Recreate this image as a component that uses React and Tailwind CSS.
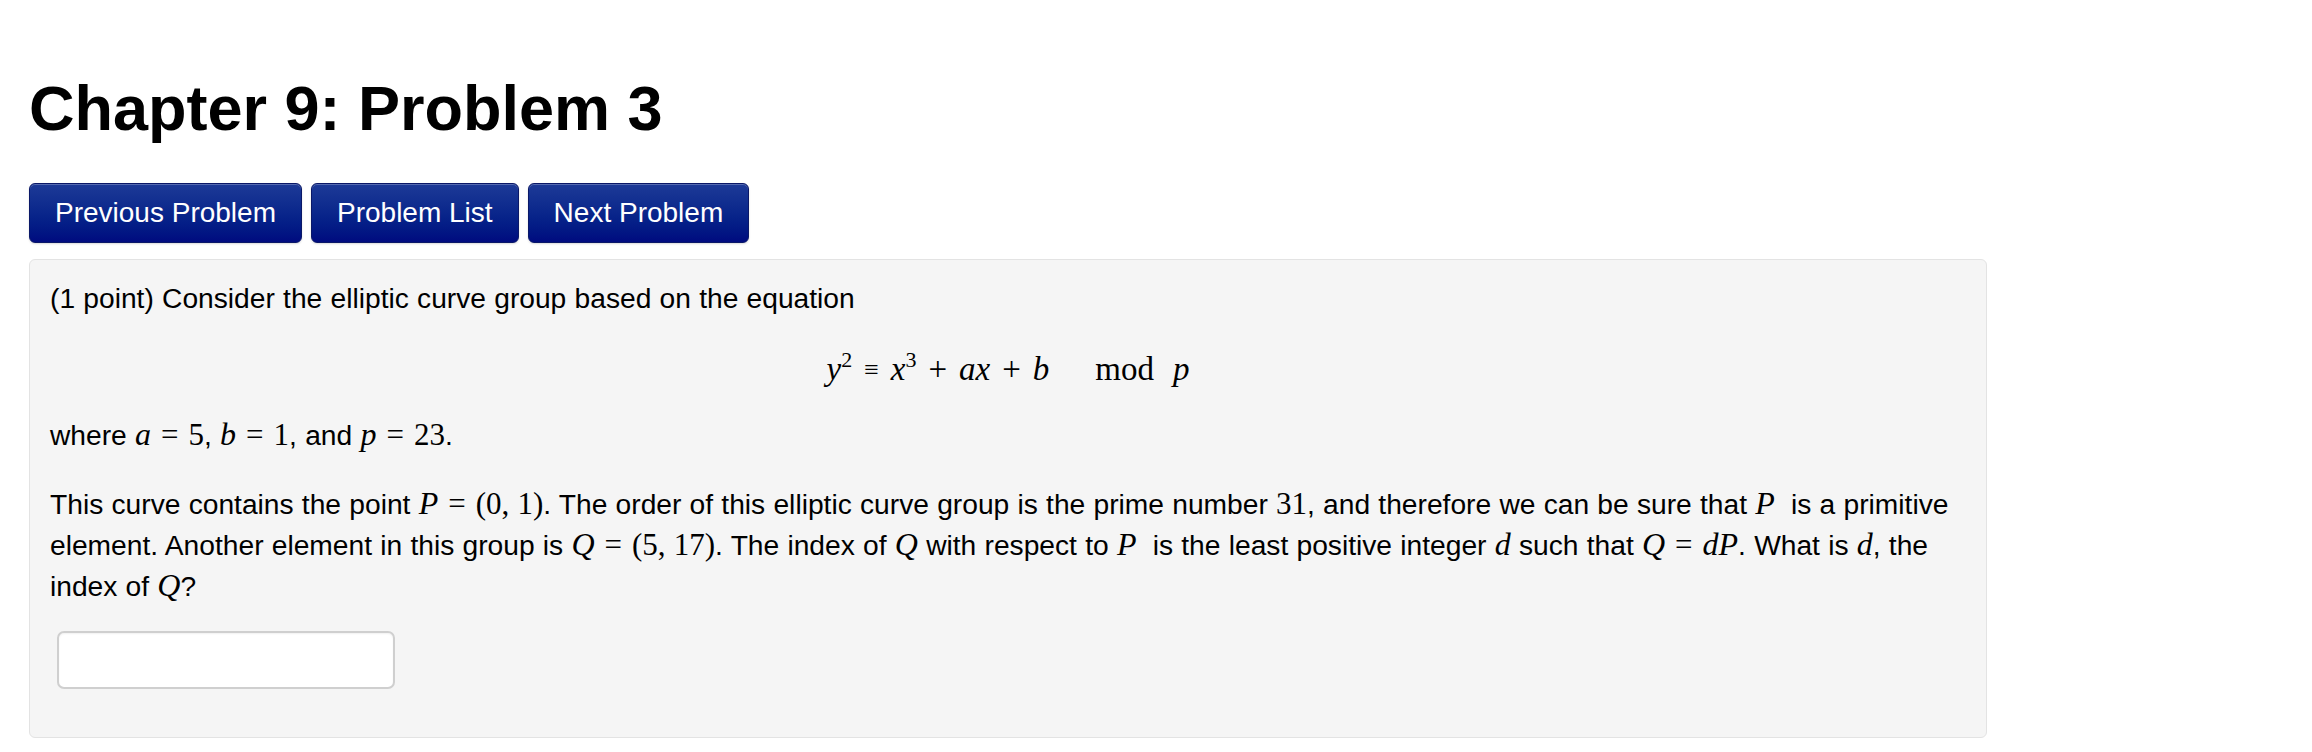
import { useState } from "react";

const sans = { fontFamily: '"Liberation Sans", Arial, Helvetica, sans-serif' };

function V({ children, gap }) {
  // italic math variable
  return (
    <span
      className={
        "italic text-[32px] font-['Liberation_Serif',serif] " + (gap ? "mr-[8px]" : "")
      }
    >
      {children}
    </span>
  );
}

function N({ children }) {
  // upright math text
  return <span className="text-[31px] font-['Liberation_Serif',serif]">{children}</span>;
}

function Eq() {
  return <span className="text-[31px] font-['Liberation_Serif',serif] mx-[10px]">=</span>;
}

function NavButton({ label }) {
  return (
    <button className="h-[60px] px-[25px] rounded-[6px] border border-[#0a1868] bg-linear-to-b from-[#1d3a97] to-[#000a7f] text-white text-[28px] shadow-[inset_0_1px_0_rgba(255,255,255,0.25),0_1px_2px_rgba(0,0,0,0.15)]">
      {label}
    </button>
  );
}

function Equation() {
  return (
    <div className="mt-[31px] mb-[25px] h-[40px] flex justify-center items-baseline font-['Liberation_Serif',serif] text-[33px] leading-[40px] text-black [word-spacing:0]">
      <span className="italic">y</span>
      <span className="text-[22px] relative -top-[13px]">2</span>
      <span className="text-[26px] mx-[12px] relative -top-[2px]">≡</span>
      <span className="italic">x</span>
      <span className="text-[22px] relative -top-[13px]">3</span>
      <span className="mx-[12px]">+</span>
      <span className="italic">ax</span>
      <span className="mx-[12px]">+</span>
      <span className="italic">b</span>
      <span className="ml-[46px]">mod</span>
      <span className="italic ml-[19px]">p</span>
    </div>
  );
}

export default function App() {
  const [answer, setAnswer] = useState("");

  return (
    <div className="min-h-screen bg-white text-black pl-[29px] pt-[74px]" style={sans}>
      <h2 className="text-[63px] font-bold leading-[69px]">Chapter 9: Problem 3</h2>

      <div className="mt-[40px] flex gap-[9px]">
        <NavButton label="Previous Problem" />
        <NavButton label="Problem List" />
        <NavButton label="Next Problem" />
      </div>

      <div className="mt-[16px] w-[1958px] bg-[#f5f5f5] border border-[#e3e3e3] rounded-[6px] px-[20px] pt-[18px] pb-[48px] text-[28.2px] leading-[40px] [word-spacing:0.4px]">
        <p>(1 point) Consider the elliptic curve group based on the equation</p>

        <Equation />

        <p>
          where <V>a</V>
          <Eq />
          <N>5</N>, <V>b</V>
          <Eq />
          <N>1</N>, and <V>p</V>
          <Eq />
          <N>23</N>.
        </p>

        <p className="mt-[28px]">
          This curve contains the point <V>P</V>
          <Eq />
          <N>(0, 1)</N>. The order of this elliptic curve group is the prime number{" "}
          <N>31</N>, and therefore we can be sure that <V gap>P</V> is a primitive
          element. Another element in this group is <V>Q</V>
          <Eq />
          <N>(5, 17)</N>. The index of <V>Q</V> with respect to <V gap>P</V> is the least
          positive integer <V>d</V> such that <V>Q</V>
          <Eq />
          <V>dP</V>. What is <V>d</V>, the index of <V>Q</V>?
        </p>

        <div className="mt-[25px] pl-[7px]">
          <input
            type="text"
            value={answer}
            onChange={(e) => setAnswer(e.target.value)}
            className="w-[338px] h-[58px] bg-white border-2 border-[#cfcfcf] rounded-[7px] px-3 text-[27px] outline-none shadow-[inset_0_1px_2px_rgba(0,0,0,0.06)]"
          />
        </div>
      </div>
    </div>
  );
}
